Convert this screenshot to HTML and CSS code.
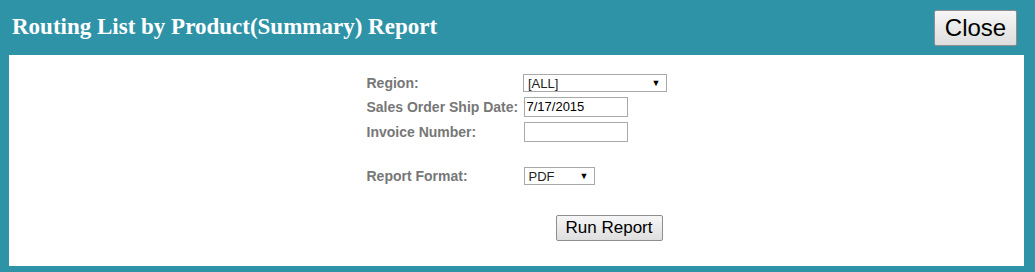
FILE: index.html
```html
<!DOCTYPE html>
<html>
<head>
<meta charset="utf-8">
<link rel="stylesheet" href="styles.css">
</head>
<body>
<div class="page">
  <div class="header">
    <h1 class="title">Routing List by Product(Summary) Report</h1>
    <button class="close-btn">Close</button>
  </div>
  <div class="content">
    <div class="form">
      <div class="row row-region">
        <span class="label">Region:</span>
        <div class="select select-wide"><span class="sel-text">[ALL]</span><span class="arrow">▼</span></div>
      </div>
      <div class="row">
        <span class="label">Sales Order Ship Date:</span>
        <div class="input">7/17/2015</div>
      </div>
      <div class="row">
        <span class="label">Invoice Number:</span>
        <div class="input"></div>
      </div>
      <div class="row row-format">
        <span class="label">Report Format:</span>
        <div class="select select-narrow"><span class="sel-text">PDF</span><span class="arrow">▼</span></div>
      </div>
      <div class="actions">
        <button class="run-btn">Run Report</button>
      </div>
    </div>
  </div>
</div>
</body>
</html>
```
FILE: styles.css
```css
html, body {
  margin: 0;
  padding: 0;
}
body {
  background: #2f93a8;
  width: 1035px;
  height: 272px;
  overflow: hidden;
}
.page {
  padding: 0 11px 6px 9px;
}
.header {
  height: 55px;
  display: flex;
  align-items: flex-start;
  justify-content: space-between;
}
.title {
  margin: 14px 0 0 3px;
  font-family: "Liberation Serif", serif;
  font-weight: bold;
  font-size: 23px;
  color: #ffffff;
  line-height: 26px;
}
.close-btn {
  margin-top: 10px;
  margin-right: 7px;
  width: 83px;
  height: 36px;
  padding: 0;
  font-family: "Liberation Sans", Arial, sans-serif;
  font-size: 24px;
  color: #000;
  background: linear-gradient(#f6f6f6, #dedede);
  border: 1px solid #8e8e8e;
  border-radius: 2px;
}
.content {
  background: #ffffff;
  height: 211px;
  padding-top: 19px;
  box-sizing: border-box;
}
.form {
  width: 300px;
  margin: 0 auto;
  font-family: "Liberation Sans", Arial, sans-serif;
  font-size: 13px;
  display: flex;
  flex-direction: column;
  gap: 5px;
}
.row {
  display: flex;
  align-items: center;
  height: 20px;
}
.row-region {
  height: 18px;
}
.label {
  width: 157px;
  font-weight: bold;
  font-size: 14px;
  color: #777777;
}
.select {
  box-sizing: border-box;
  height: 18px;
  border: 1px solid #a9a9a9;
  display: flex;
  align-items: center;
  justify-content: space-between;
  padding: 0 5px 0 4px;
  color: #222;
  font-size: 13px;
}
.select-wide { width: 144px; }
.select-narrow { width: 71px; }
.arrow {
  font-size: 9px;
  color: #000;
}
.input {
  box-sizing: border-box;
  width: 104px;
  height: 20px;
  border: 1px solid #a9a9a9;
  padding: 0 2px;
  line-height: 18px;
  color: #000;
}
.row-format {
  margin-top: 20px;
  height: 18px;
}
.actions {
  margin-top: 25px;
  padding-left: 189px;
}
.run-btn {
  width: 107px;
  height: 26px;
  padding: 0;
  font-family: "Liberation Sans", Arial, sans-serif;
  font-size: 17px;
  color: #000;
  background: linear-gradient(#f6f6f6, #dedede);
  border: 1px solid #8e8e8e;
  border-radius: 2px;
}
```
